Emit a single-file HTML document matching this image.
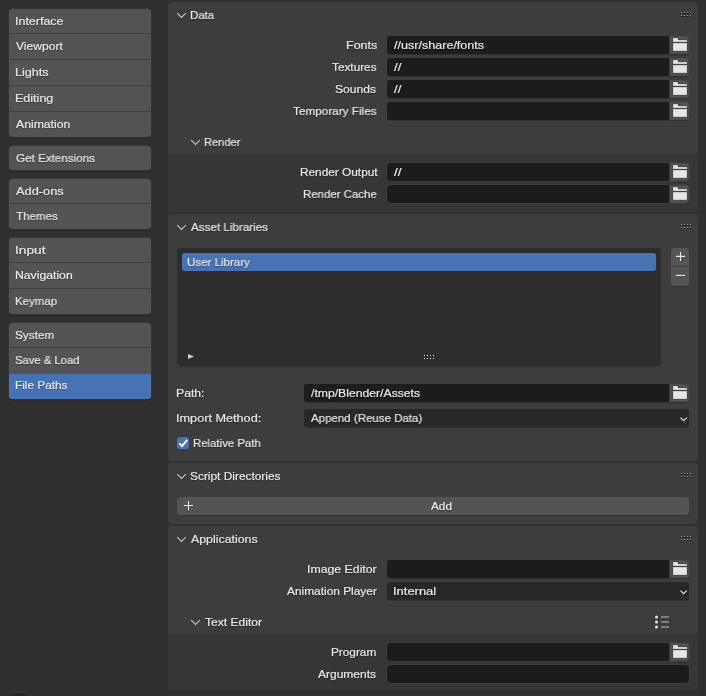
<!DOCTYPE html>
<html><head><meta charset="utf-8"><style>
html,body{margin:0;padding:0;}
body{width:706px;height:696px;background:#303030;position:relative;overflow:hidden;font-family:"Liberation Sans",sans-serif;font-size:11.8px;color:#e6e6e6;}
.a{position:absolute;}
.t{position:absolute;line-height:11.8px;white-space:pre;will-change:transform;transform-origin:0 0;text-shadow:0 1px 1px rgba(0,0,0,0.35);-webkit-text-stroke:0.2px #e6e6e6;}
.grp{position:absolute;left:9px;width:142px;background:#545454;border-radius:4px;box-shadow:0 0 0 0.7px rgba(64,64,64,0.5),0 2px 0 rgba(0,0,0,0.13);overflow:hidden;}
.dv{position:absolute;left:0;width:142px;height:1px;background:#414141;}
.panel{position:absolute;left:168px;width:530px;background:#3d3d3d;border-radius:4px;overflow:hidden;}
.sub{position:absolute;left:0;width:530px;background:#363636;}
.fld{position:absolute;background:#1d1d1d;height:18px;border-radius:3px;box-shadow:0 1px 0 rgba(0,0,0,0.2);}
.fb{position:absolute;background:#545454;height:18px;border-radius:0 3px 3px 0;box-shadow:inset 0 0 0 1px rgba(0,0,0,0.1),0 1px 0 rgba(0,0,0,0.2);}
.ol{outline:1px solid #3d3d3d;}
.menu{position:absolute;background:#282828;height:18px;border-radius:3px;box-shadow:0 1px 0 rgba(0,0,0,0.2);}
.btn{position:absolute;background:#545454;border-radius:3px;box-shadow:0 1px 0 rgba(0,0,0,0.15);}
</style></head><body>
<div class="grp" style="top:9px;height:128.30px;"><div class="dv" style="top:23.80px"></div><div class="dv" style="top:49.90px"></div><div class="dv" style="top:75.80px"></div><div class="dv" style="top:102.00px"></div></div>
<div class="t" style="left:15.34px;top:16px;transform:scaleX(1.0556);">Interface</div>
<div class="t" style="left:16.40px;top:41px;transform:scaleX(1.0239);">Viewport</div>
<div class="t" style="left:15.33px;top:67px;transform:scaleX(1.0700);">Lights</div>
<div class="t" style="left:15.34px;top:92.5px;transform:scaleX(1.0629);">Editing</div>
<div class="t" style="left:16.40px;top:118.5px;transform:scaleX(1.0346);">Animation</div>
<div class="grp" style="top:145.8px;height:24.30px;"></div>
<div class="t" style="left:16.40px;top:153px;transform:scaleX(0.9875);">Get Extensions</div>
<div class="grp" style="top:178.6px;height:50.40px;"><div class="dv" style="top:24.40px"></div></div>
<div class="t" style="left:16.40px;top:186px;transform:scaleX(1.0864);">Add-ons</div>
<div class="t" style="left:16.40px;top:211px;transform:scaleX(0.9786);">Themes</div>
<div class="grp" style="top:238px;height:76.00px;"><div class="dv" style="top:23.80px"></div><div class="dv" style="top:50.30px"></div></div>
<div class="t" style="left:15.24px;top:245px;transform:scaleX(1.1600);">Input</div>
<div class="t" style="left:15.36px;top:270px;transform:scaleX(1.0352);">Navigation</div>
<div class="t" style="left:15.43px;top:295.5px;transform:scaleX(0.9714);">Keymap</div>
<div class="grp" style="top:322.6px;height:76.40px;"><div class="dv" style="top:24.20px"></div><div class="a" style="left:0;top:51.20px;width:142px;bottom:0;background:#4772b3"></div></div>
<div class="t" style="left:15.41px;top:329.7px;transform:scaleX(0.9947);">System</div>
<div class="t" style="left:15.45px;top:354.7px;transform:scaleX(0.9545);">Save &amp; Load</div>
<div class="t" style="left:15.40px;top:380.4px;transform:scaleX(1.0000);">File Paths</div>
<div class="a" style="left:8px;top:692px;width:18px;height:10px;background:#282828;border:1px solid #3b3b3b;border-radius:4px;"></div>
<div class="panel" style="top:2px;height:210.00px;"></div>
<svg class="a" style="left:176px;top:12px" width="11" height="7" viewBox="0 0 11 7"><polyline points="1.2,1.2 5.5,5.4 9.8,1.2" fill="none" stroke="#c8c8c8" stroke-width="1.1"/></svg>
<div class="t" style="left:189.63px;top:10px;transform:scaleX(0.9708);">Data</div>
<svg class="a" style="left:681px;top:12px" width="11" height="7"><rect x="0" y="1" width="1" height="1" fill="#000"/><rect x="0" y="0" width="1" height="1" fill="#9a9a9a"/><rect x="0" y="4" width="1" height="1" fill="#000"/><rect x="0" y="3" width="1" height="1" fill="#9a9a9a"/><rect x="3" y="1" width="1" height="1" fill="#000"/><rect x="3" y="0" width="1" height="1" fill="#9a9a9a"/><rect x="3" y="4" width="1" height="1" fill="#000"/><rect x="3" y="3" width="1" height="1" fill="#9a9a9a"/><rect x="6" y="1" width="1" height="1" fill="#000"/><rect x="6" y="0" width="1" height="1" fill="#9a9a9a"/><rect x="6" y="4" width="1" height="1" fill="#000"/><rect x="6" y="3" width="1" height="1" fill="#9a9a9a"/><rect x="9" y="1" width="1" height="1" fill="#000"/><rect x="9" y="0" width="1" height="1" fill="#9a9a9a"/><rect x="9" y="4" width="1" height="1" fill="#000"/><rect x="9" y="3" width="1" height="1" fill="#9a9a9a"/></svg>
<div class="t" style="left:345.54px;top:40px;transform:scaleX(1.0607);">Fonts</div>
<div class="fld" style="left:387px;top:36px;width:281.70px;border-radius:3px 0 0 3px"></div>
<div class="fb" style="left:669.5px;top:36px;width:19.50px"></div>
<svg class="a" style="left:672px;top:37px" width="17" height="16" viewBox="0 0 17 16"><path d="M1,1 H6 V3 H15 V5 H1 Z M1,6 H15 V14 H1 Z" fill="#e6e6e6" stroke="rgba(0,0,0,0.35)" stroke-width="0.6"/></svg>
<div class="t" style="left:394.00px;top:40px;transform:scaleX(1.0655);">//usr/share/fonts</div>
<div class="t" style="left:332.40px;top:62px;transform:scaleX(0.9977);">Textures</div>
<div class="fld" style="left:387px;top:58px;width:281.70px;border-radius:3px 0 0 3px"></div>
<div class="fb" style="left:669.5px;top:58px;width:19.50px"></div>
<svg class="a" style="left:672px;top:59px" width="17" height="16" viewBox="0 0 17 16"><path d="M1,1 H6 V3 H15 V5 H1 Z M1,6 H15 V14 H1 Z" fill="#e6e6e6" stroke="rgba(0,0,0,0.35)" stroke-width="0.6"/></svg>
<div class="t" style="left:394.00px;top:62px;transform:scaleX(1.1143);">//</div>
<div class="t" style="left:335.38px;top:84px;transform:scaleX(1.0231);">Sounds</div>
<div class="fld" style="left:387px;top:80px;width:281.70px;border-radius:3px 0 0 3px"></div>
<div class="fb" style="left:669.5px;top:80px;width:19.50px"></div>
<svg class="a" style="left:672px;top:81px" width="17" height="16" viewBox="0 0 17 16"><path d="M1,1 H6 V3 H15 V5 H1 Z M1,6 H15 V14 H1 Z" fill="#e6e6e6" stroke="rgba(0,0,0,0.35)" stroke-width="0.6"/></svg>
<div class="t" style="left:394.00px;top:84px;transform:scaleX(1.1143);">//</div>
<div class="t" style="left:292.70px;top:106px;transform:scaleX(0.9952);">Temporary Files</div>
<div class="fld" style="left:387px;top:102px;width:281.70px;border-radius:3px 0 0 3px"></div>
<div class="fb" style="left:669.5px;top:102px;width:19.50px"></div>
<svg class="a" style="left:672px;top:103px" width="17" height="16" viewBox="0 0 17 16"><path d="M1,1 H6 V3 H15 V5 H1 Z M1,6 H15 V14 H1 Z" fill="#e6e6e6" stroke="rgba(0,0,0,0.35)" stroke-width="0.6"/></svg>
<div class="a" style="left:168px;top:154px;width:530px;height:58px;background:#363636;border-radius:0 0 4px 4px"></div>
<svg class="a" style="left:190px;top:139px" width="11" height="7" viewBox="0 0 11 7"><polyline points="1.2,1.2 5.5,5.4 9.8,1.2" fill="none" stroke="#c8c8c8" stroke-width="1.1"/></svg>
<div class="t" style="left:203.76px;top:136.7px;transform:scaleX(0.9395);">Render</div>
<div class="fld ol" style="left:387px;top:163px;width:281.70px;border-radius:3px 0 0 3px"></div>
<div class="fb ol" style="left:669.5px;top:163px;width:19.50px"></div>
<svg class="a" style="left:672px;top:164px" width="17" height="16" viewBox="0 0 17 16"><path d="M1,1 H6 V3 H15 V5 H1 Z M1,6 H15 V14 H1 Z" fill="#e6e6e6" stroke="rgba(0,0,0,0.35)" stroke-width="0.6"/></svg>
<div class="t" style="left:299.50px;top:167px;transform:scaleX(1.0026);">Render Output</div>
<div class="t" style="left:394.00px;top:167px;transform:scaleX(1.1571);">//</div>
<div class="fld ol" style="left:387px;top:185px;width:281.70px;border-radius:3px 0 0 3px"></div>
<div class="fb ol" style="left:669.5px;top:185px;width:19.50px"></div>
<svg class="a" style="left:672px;top:186px" width="17" height="16" viewBox="0 0 17 16"><path d="M1,1 H6 V3 H15 V5 H1 Z M1,6 H15 V14 H1 Z" fill="#e6e6e6" stroke="rgba(0,0,0,0.35)" stroke-width="0.6"/></svg>
<div class="t" style="left:303.43px;top:189px;transform:scaleX(0.9693);">Render Cache</div>
<div class="panel" style="top:214px;height:246.80px;"></div>
<svg class="a" style="left:176px;top:224px" width="11" height="7" viewBox="0 0 11 7"><polyline points="1.2,1.2 5.5,5.4 9.8,1.2" fill="none" stroke="#c8c8c8" stroke-width="1.1"/></svg>
<div class="t" style="left:190.60px;top:222px;transform:scaleX(0.9872);">Asset Libraries</div>
<svg class="a" style="left:681px;top:224px" width="11" height="7"><rect x="0" y="1" width="1" height="1" fill="#000"/><rect x="0" y="0" width="1" height="1" fill="#9a9a9a"/><rect x="0" y="4" width="1" height="1" fill="#000"/><rect x="0" y="3" width="1" height="1" fill="#9a9a9a"/><rect x="3" y="1" width="1" height="1" fill="#000"/><rect x="3" y="0" width="1" height="1" fill="#9a9a9a"/><rect x="3" y="4" width="1" height="1" fill="#000"/><rect x="3" y="3" width="1" height="1" fill="#9a9a9a"/><rect x="6" y="1" width="1" height="1" fill="#000"/><rect x="6" y="0" width="1" height="1" fill="#9a9a9a"/><rect x="6" y="4" width="1" height="1" fill="#000"/><rect x="6" y="3" width="1" height="1" fill="#9a9a9a"/><rect x="9" y="1" width="1" height="1" fill="#000"/><rect x="9" y="0" width="1" height="1" fill="#9a9a9a"/><rect x="9" y="4" width="1" height="1" fill="#000"/><rect x="9" y="3" width="1" height="1" fill="#9a9a9a"/></svg>
<div class="a" style="left:177.4px;top:248.3px;width:483.3px;height:118px;background:#2d2d2d;border-radius:4px;box-shadow:0 1px 1px rgba(0,0,0,0.15)"></div>
<div class="a" style="left:182px;top:253.2px;width:474px;height:18px;background:#4772b3;border-radius:3px"></div>
<div class="t" style="left:186.72px;top:257.3px;transform:scaleX(0.9778);">User Library</div>
<div class="btn" style="left:671px;top:248px;width:18px;height:38px;overflow:hidden"><div class="a" style="left:0;top:18.4px;width:18px;height:1px;background:#414141"></div></div>
<svg class="a" style="left:671px;top:248px" width="18" height="38" viewBox="0 0 18 38"><path d="M5,8.4 H14 M9.5,4 V13" stroke="#e6e6e6" stroke-width="1.1" fill="none"/><path d="M5,27.4 H14" stroke="#e6e6e6" stroke-width="1.1" fill="none"/></svg>
<svg class="a" style="left:187px;top:353px" width="8" height="7" viewBox="0 0 8 7"><path d="M1,1 L7,3.5 L1,6 Z" fill="#d0d0d0"/></svg>
<svg class="a" style="left:424px;top:355px" width="12" height="6"><rect x="0" y="0" width="1" height="1" fill="#e0e0e0"/><rect x="0" y="3" width="1" height="1" fill="#e0e0e0"/><rect x="3" y="0" width="1" height="1" fill="#e0e0e0"/><rect x="3" y="3" width="1" height="1" fill="#e0e0e0"/><rect x="6" y="0" width="1" height="1" fill="#e0e0e0"/><rect x="6" y="3" width="1" height="1" fill="#e0e0e0"/><rect x="9" y="0" width="1" height="1" fill="#e0e0e0"/><rect x="9" y="3" width="1" height="1" fill="#e0e0e0"/></svg>
<div class="t" style="left:176.07px;top:388.3px;transform:scaleX(1.0346);">Path:</div>
<div class="fld" style="left:304.2px;top:384.3px;width:364.50px;border-radius:3px 0 0 3px"></div>
<div class="fb" style="left:669.5px;top:384.3px;width:19.50px"></div>
<svg class="a" style="left:672px;top:385.3px" width="17" height="16" viewBox="0 0 17 16"><path d="M1,1 H6 V3 H15 V5 H1 Z M1,6 H15 V14 H1 Z" fill="#e6e6e6" stroke="rgba(0,0,0,0.35)" stroke-width="0.6"/></svg>
<div class="t" style="left:310.90px;top:388.3px;transform:scaleX(1.0333);">/tmp/Blender/Assets</div>
<div class="t" style="left:176.03px;top:413.3px;transform:scaleX(1.0744);">Import Method:</div>
<div class="menu" style="left:304.2px;top:409.3px;width:384.8px"></div>
<svg class="a" style="left:679.5px;top:416.8px" width="8" height="5" viewBox="0 0 8 5"><polyline points="0.5,0.6 3.6,3.7 6.7,0.6" fill="none" stroke="#e6e6e6" stroke-width="1.05"/></svg>
<div class="t" style="left:311.30px;top:413.3px;transform:scaleX(0.9746);">Append (Reuse Data)</div>
<div class="a" style="left:177px;top:437px;width:12px;height:12px;background:#4772b3;border-radius:3px"></div>
<svg class="a" style="left:177px;top:437px" width="12" height="12" viewBox="0 0 12 12"><polyline points="2.3,6.4 5,9 10.2,2.8" fill="none" stroke="#fff" stroke-width="1.9"/></svg>
<div class="t" style="left:192.53px;top:438.3px;transform:scaleX(0.9652);">Relative Path</div>
<div class="panel" style="top:463px;height:60.50px;"></div>
<svg class="a" style="left:176px;top:473px" width="11" height="7" viewBox="0 0 11 7"><polyline points="1.2,1.2 5.5,5.4 9.8,1.2" fill="none" stroke="#c8c8c8" stroke-width="1.1"/></svg>
<div class="t" style="left:189.59px;top:471px;transform:scaleX(1.0079);">Script Directories</div>
<svg class="a" style="left:681px;top:473px" width="11" height="7"><rect x="0" y="1" width="1" height="1" fill="#000"/><rect x="0" y="0" width="1" height="1" fill="#9a9a9a"/><rect x="0" y="4" width="1" height="1" fill="#000"/><rect x="0" y="3" width="1" height="1" fill="#9a9a9a"/><rect x="3" y="1" width="1" height="1" fill="#000"/><rect x="3" y="0" width="1" height="1" fill="#9a9a9a"/><rect x="3" y="4" width="1" height="1" fill="#000"/><rect x="3" y="3" width="1" height="1" fill="#9a9a9a"/><rect x="6" y="1" width="1" height="1" fill="#000"/><rect x="6" y="0" width="1" height="1" fill="#9a9a9a"/><rect x="6" y="4" width="1" height="1" fill="#000"/><rect x="6" y="3" width="1" height="1" fill="#9a9a9a"/><rect x="9" y="1" width="1" height="1" fill="#000"/><rect x="9" y="0" width="1" height="1" fill="#9a9a9a"/><rect x="9" y="4" width="1" height="1" fill="#000"/><rect x="9" y="3" width="1" height="1" fill="#9a9a9a"/></svg>
<div class="btn" style="left:177px;top:497px;width:512px;height:18px"></div>
<svg class="a" style="left:183px;top:500px" width="11" height="11" viewBox="0 0 11 11"><path d="M0.9,5.5 H10 M5.5,1 V10" stroke="#e6e6e6" stroke-width="1.1" fill="none"/></svg>
<div class="t" style="left:431.20px;top:501px;transform:scaleX(1.0000);">Add</div>
<div class="panel" style="top:526px;height:165.00px;"></div>
<svg class="a" style="left:176px;top:536px" width="11" height="7" viewBox="0 0 11 7"><polyline points="1.2,1.2 5.5,5.4 9.8,1.2" fill="none" stroke="#c8c8c8" stroke-width="1.1"/></svg>
<div class="t" style="left:190.60px;top:534px;transform:scaleX(1.0476);">Applications</div>
<svg class="a" style="left:681px;top:536px" width="11" height="7"><rect x="0" y="1" width="1" height="1" fill="#000"/><rect x="0" y="0" width="1" height="1" fill="#9a9a9a"/><rect x="0" y="4" width="1" height="1" fill="#000"/><rect x="0" y="3" width="1" height="1" fill="#9a9a9a"/><rect x="3" y="1" width="1" height="1" fill="#000"/><rect x="3" y="0" width="1" height="1" fill="#9a9a9a"/><rect x="3" y="4" width="1" height="1" fill="#000"/><rect x="3" y="3" width="1" height="1" fill="#9a9a9a"/><rect x="6" y="1" width="1" height="1" fill="#000"/><rect x="6" y="0" width="1" height="1" fill="#9a9a9a"/><rect x="6" y="4" width="1" height="1" fill="#000"/><rect x="6" y="3" width="1" height="1" fill="#9a9a9a"/><rect x="9" y="1" width="1" height="1" fill="#000"/><rect x="9" y="0" width="1" height="1" fill="#9a9a9a"/><rect x="9" y="4" width="1" height="1" fill="#000"/><rect x="9" y="3" width="1" height="1" fill="#9a9a9a"/></svg>
<div class="fld" style="left:387px;top:560px;width:281.70px;border-radius:3px 0 0 3px"></div>
<div class="fb" style="left:669.5px;top:560px;width:19.50px"></div>
<svg class="a" style="left:672px;top:561px" width="17" height="16" viewBox="0 0 17 16"><path d="M1,1 H6 V3 H15 V5 H1 Z M1,6 H15 V14 H1 Z" fill="#e6e6e6" stroke="rgba(0,0,0,0.35)" stroke-width="0.6"/></svg>
<div class="t" style="left:306.96px;top:564px;transform:scaleX(1.0424);">Image Editor</div>
<div class="menu" style="left:387px;top:582px;width:302px"></div>
<svg class="a" style="left:679.5px;top:589.5px" width="8" height="5" viewBox="0 0 8 5"><polyline points="0.5,0.6 3.6,3.7 6.7,0.6" fill="none" stroke="#e6e6e6" stroke-width="1.05"/></svg>
<div class="t" style="left:287.10px;top:586px;transform:scaleX(1.0079);">Animation Player</div>
<div class="t" style="left:393.00px;top:586px;transform:scaleX(1.0974);">Internal</div>
<svg class="a" style="left:190px;top:619px" width="11" height="7" viewBox="0 0 11 7"><polyline points="1.2,1.2 5.5,5.4 9.8,1.2" fill="none" stroke="#c8c8c8" stroke-width="1.1"/></svg>
<div class="t" style="left:204.60px;top:617.3px;transform:scaleX(1.0250);">Text Editor</div>
<svg class="a" style="left:654px;top:614px" width="16" height="15" viewBox="0 0 16 15"><circle cx="2.5" cy="3" r="1.5" fill="#e6e6e6"/><circle cx="2.5" cy="8" r="1.5" fill="#e6e6e6"/><circle cx="2.5" cy="13" r="1.5" fill="#e6e6e6"/><rect x="7" y="2" width="8" height="2" fill="#808080"/><rect x="7" y="7" width="8" height="2" fill="#808080"/><rect x="7" y="12" width="8" height="2" fill="#808080"/></svg>
<div class="a" style="left:168px;top:634px;width:530px;height:57px;background:#363636;border-radius:0 0 4px 4px"></div>
<div class="fld ol" style="left:387px;top:643px;width:281.70px;border-radius:3px 0 0 3px"></div>
<div class="fb ol" style="left:669.5px;top:643px;width:19.50px"></div>
<svg class="a" style="left:672px;top:644px" width="17" height="16" viewBox="0 0 17 16"><path d="M1,1 H6 V3 H15 V5 H1 Z M1,6 H15 V14 H1 Z" fill="#e6e6e6" stroke="rgba(0,0,0,0.35)" stroke-width="0.6"/></svg>
<div class="t" style="left:331.30px;top:647px;transform:scaleX(1.0000);">Program</div>
<div class="fld ol" style="left:387px;top:665px;width:302px"></div>
<div class="t" style="left:318.30px;top:669px;transform:scaleX(1.0175);">Arguments</div>
</body></html>
